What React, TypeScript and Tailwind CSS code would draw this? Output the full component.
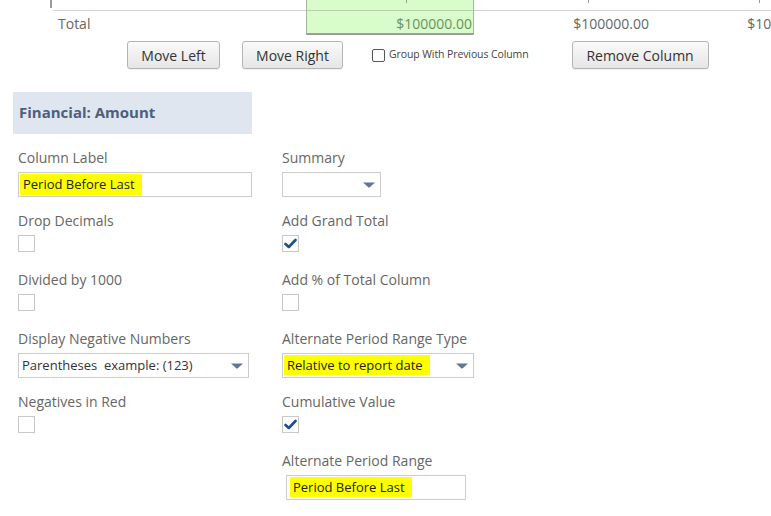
import React from "react";

const font = { fontFamily: '"Open Sans", "Liberation Sans", sans-serif' };

// small filled triangle used on the select boxes
const Caret = () => (
  <svg width="12" height="6" viewBox="0 0 12 6" className="shrink-0">
    <path d="M0 0.5 H12 L6.5 5.5 H5.5 Z" fill="#5f7699" />
  </svg>
);

const Checkbox = ({ checked }: { checked?: boolean }) => (
  <div className="h-[21px]">
    <div className="w-[17px] h-[17px] border border-[#c8c8c8] bg-white flex items-center justify-center">
      {checked && (
        <svg width="13" height="11" viewBox="0 0 13 11">
          <path
            d="M1.5 6 L4.8 9 L11.5 2"
            fill="none"
            stroke="#1f4d8d"
            strokeWidth="2.6"
            strokeLinecap="round"
            strokeLinejoin="round"
          />
        </svg>
      )}
    </div>
  </div>
);

const Mark = ({ children }: { children: React.ReactNode }) => (
  <span className="bg-[#ffff00] pl-[3px] pr-[7px] py-[1px]">{children}</span>
);

const Label = ({ children }: { children: React.ReactNode }) => (
  <div className="h-[20px] leading-[20px] text-[14px] text-[#666] mb-[4px] whitespace-nowrap">
    {children}
  </div>
);

const Field = ({ label, children }: { label: string; children: React.ReactNode }) => (
  <div className="mb-[14px]">
    <Label>{label}</Label>
    {children}
  </div>
);

const TextBox = ({ width, children }: { width: string; children?: React.ReactNode }) => (
  <div
    className={`${width} h-[25px] border border-[#cccccc] bg-white flex items-center px-[1px] text-[13px] text-[#222] whitespace-nowrap`}
  >
    {children}
  </div>
);

const SelectBox = ({ width, children }: { width: string; children?: React.ReactNode }) => (
  <div
    className={`${width} h-[25px] border border-[#cccccc] bg-white flex items-center justify-between pl-[1px] pr-[5px] text-[13px] text-[#222] whitespace-nowrap`}
  >
    <span>{children}</span>
    <Caret />
  </div>
);

const Button = ({ width, children }: { width: string; children: React.ReactNode }) => (
  <button
    className={`${width} h-[28px] rounded-[3px] border border-[#b4b4b4] bg-gradient-to-b from-[#fafafa] to-[#e6e6e6] text-[14px] text-[#333] shadow-[0_1px_0_rgba(0,0,0,0.05)]`}
  >
    {children}
  </button>
);

// the row above "Total" is scrolled off; only the tails of its "$" signs peek out
const cols = [
  { tick: "ml-[99px]", total: "$100000.00", green: true, w: "w-[168px]" },
  { tick: "ml-[114px]", total: "$100000.00", green: false, w: "w-[176px]" },
  { tick: "ml-[109px]", total: "$100000.00", green: false, w: "w-[174px]" },
];

export default function App() {
  return (
    <div className="w-[771px] h-[516px] overflow-hidden bg-white" style={font}>
      {/* report preview table, cut off at the top */}
      <div className="flex pl-[50px] h-[35px]">
        <div className="w-[3px] shrink-0">
          <div className="w-[2px] h-[8px] bg-[#9a9a9a]" />
        </div>
        <div className="w-[253px] shrink-0">
          <div className="h-[11px] border-b border-[#d2d2d2]" />
          <div className="h-[22px] leading-[22px] pt-[2px] pl-[5px] text-[14px] text-[#666]">Total</div>
        </div>
        {cols.map((c, i) => (
          <div
            key={i}
            className={
              c.green
                ? `${c.w} shrink-0 bg-[#d8fcca] border-x border-[#a8b8a0] border-b-2 border-b-[#9c9c9c] h-[35px]`
                : `${c.w} shrink-0`
            }
          >
            <div
              className={`h-[11px] border-b ${c.green ? "border-[#b8d0ac]" : "border-[#d2d2d2]"}`}
            >
              <div className={`${c.tick} w-[1px] h-[3px] ${c.green ? "bg-[#8aa77e]" : "bg-[#999]"}`} />
            </div>
            <div
              className={`h-[22px] leading-[22px] pt-[2px] text-[14px] text-right pr-[1px] whitespace-nowrap ${c.green ? "text-[#6f8f62]" : "text-[#666]"}`}
            >
              {c.total}
            </div>
          </div>
        ))}
      </div>

      {/* column buttons */}
      <div className="flex items-center mt-[6px] pl-[127px] h-[28px]">
        <Button width="w-[93px]">Move Left</Button>
        <div className="ml-[22px]">
          <Button width="w-[101px]">Move Right</Button>
        </div>
        <label className="ml-[29px] flex items-center">
          <span className="w-[13px] h-[13px] rounded-[2px] border border-[#555] bg-white" />
          <span className="ml-[4px] text-[10.5px] tracking-[-0.1px] text-[#444] whitespace-nowrap">
            Group With Previous Column
          </span>
        </label>
        <div className="ml-[43px]">
          <Button width="w-[137px]">Remove Column</Button>
        </div>
      </div>

      {/* section header */}
      <div className="ml-[13px] mt-[23px] w-[239px] h-[42px] bg-[#dfe6ef] flex items-center pl-[6px]">
        <span className="text-[15px] font-bold text-[#4d5f7d] -mt-[1px]">Financial: Amount</span>
      </div>

      {/* field grid */}
      <div className="grid grid-cols-[264px_1fr] pl-[18px] mt-[14px]">
        <Field label="Column Label">
          <TextBox width="w-[234px]">
            <Mark>Period Before Last</Mark>
          </TextBox>
        </Field>
        <Field label="Summary">
          <SelectBox width="w-[99px]" />
        </Field>

        <Field label="Drop Decimals">
          <Checkbox />
        </Field>
        <Field label="Add Grand Total">
          <Checkbox checked />
        </Field>

        <Field label="Divided by 1000">
          <Checkbox />
        </Field>
        <Field label="Add % of Total Column">
          <Checkbox />
        </Field>

        <Field label="Display Negative Numbers">
          <SelectBox width="w-[231px]">
            <span className="pl-[2px] text-[#333] whitespace-pre">Parentheses  example: (123)</span>
          </SelectBox>
        </Field>
        <Field label="Alternate Period Range Type">
          <SelectBox width="w-[192px]">
            <Mark>Relative to report date</Mark>
          </SelectBox>
        </Field>

        <Field label="Negatives in Red">
          <Checkbox />
        </Field>
        <Field label="Cumulative Value">
          <Checkbox checked />
        </Field>

        <div />
        <Field label="Alternate Period Range">
          <div className="ml-[4px]">
            <TextBox width="w-[180px]">
              <span className="ml-[2px]">
                <Mark>Period Before Last</Mark>
              </span>
            </TextBox>
          </div>
        </Field>
      </div>
    </div>
  );
}
